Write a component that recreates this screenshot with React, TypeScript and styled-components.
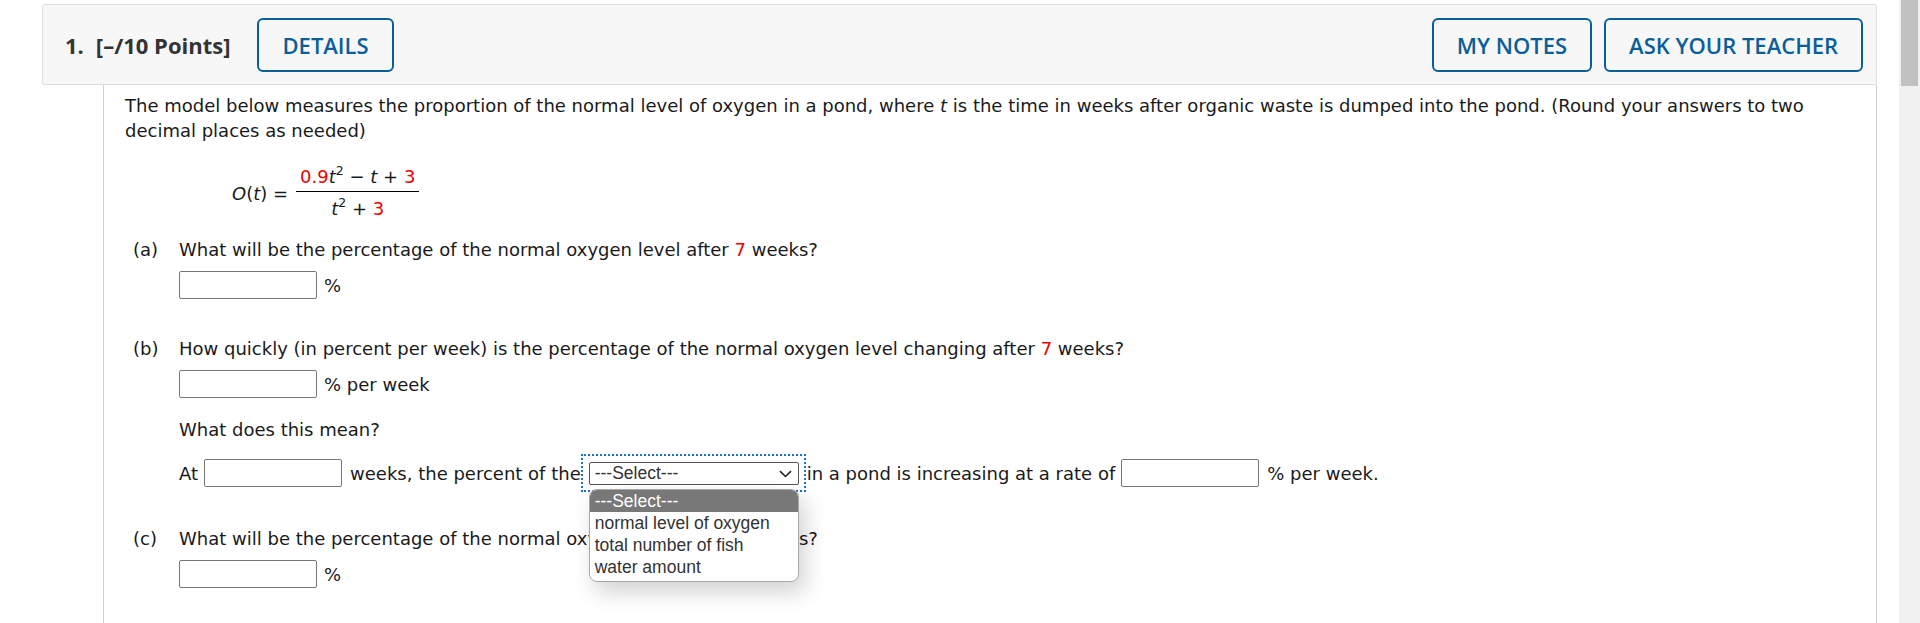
import React from "react";
import styled, { createGlobalStyle } from "styled-components";

const GlobalStyle = createGlobalStyle`
  html, body {
    margin: 0;
    padding: 0;
    background: #fff;
    overflow: hidden;
  }
  body {
    font-family: "DejaVu Sans", Verdana, sans-serif;
    color: #1a1a1a;
  }
`;

const Page = styled.div`
  display: flex;
  height: 623px;
`;

const Main = styled.div`
  flex: 1;
  min-width: 0;
  display: flex;
  flex-direction: column;
  padding: 4px 22px 0 42px;
`;

const ScrollTrack = styled.div`
  width: 21px;
  flex-shrink: 0;
  box-sizing: border-box;
  padding: 0 2px;
  background: #f1f1f1;
`;

const ScrollThumb = styled.div`
  height: 86px;
  background: #c1c1c1;
`;

const QuestionHeader = styled.div`
  display: flex;
  align-items: center;
  height: 81px;
  box-sizing: border-box;
  padding: 0 13px 0 22px;
  background: #f7f7f7;
  border: 1px solid #dedede;
  border-radius: 2px;
`;

const Points = styled.div`
  font-family: "Open Sans", "Liberation Sans", sans-serif;
  font-weight: 700;
  font-size: 22px;
  color: #333;
  white-space: nowrap;

  span {
    margin-right: 12px;
  }
`;

const HeaderButton = styled.button`
  height: 54px;
  padding: 0 23px;
  background: transparent;
  border: 2px solid #0b5f98;
  border-radius: 6px;
  color: #0b5f98;
  font-family: "Open Sans", "Liberation Sans", sans-serif;
  font-weight: 600;
  font-size: 22px;
  white-space: nowrap;
  cursor: pointer;
`;

const DetailsButton = styled(HeaderButton)`
  margin-left: 27px;
`;

const RightButtons = styled.div`
  display: flex;
  gap: 12px;
  margin-left: auto;
`;

const QuestionBody = styled.div`
  flex: 1;
  margin-left: 61px;
  padding: 8px 0 0 21px;
  border-left: 1px solid #cfcfcf;
  border-right: 1px solid #cfcfcf;
  font-size: 18px;
  line-height: 25px;
`;

const Intro = styled.p`
  margin: 0;
  max-width: 1712px;
`;

const Red = styled.span`
  color: #ee0000;
`;

const Var = styled.i`
  font-style: italic;
`;

const Sup = styled.sup`
  font-size: 12.5px;
  line-height: 0;
  vertical-align: 0;
  position: relative;
  top: -8px;
`;

const Formula = styled.div`
  display: flex;
  align-items: center;
  margin: 23px 0 0 107px;
`;

const FormulaLabel = styled.span`
  white-space: nowrap;
`;

const Fraction = styled.span`
  display: inline-flex;
  flex-direction: column;
  align-items: center;
  margin-left: 8px;
  line-height: 22px;
`;

const Numerator = styled.span`
  padding: 0 4px 3px;
  border-bottom: 1px solid #000;
  white-space: nowrap;
`;

const Denominator = styled.span`
  padding-top: 6px;
  white-space: nowrap;
`;

const Part = styled.div<{ $top: number }>`
  display: grid;
  grid-template-columns: 54px 1fr;
  margin-top: ${(p) => p.$top}px;
`;

const PartLabel = styled.div`
  padding-left: 8px;
`;

const PartContent = styled.div`
  min-width: 0;
`;

const AnswerRow = styled.div`
  display: flex;
  align-items: center;
  height: 28px;
  margin-top: 9px;
`;

const Field = styled.input`
  width: 138px;
  height: 28px;
  box-sizing: border-box;
  margin: 0;
  border: 1px solid #767676;
  border-radius: 2px;
  background: #fff;
  flex-shrink: 0;
  display: block;
`;

const Unit = styled.span<{ $ml?: number }>`
  margin-left: ${(p) => p.$ml ?? 7}px;
  white-space: nowrap;
`;

const Prompt = styled.div`
  margin-top: 19px;
`;

const SentenceRow = styled.div`
  display: flex;
  align-items: center;
  height: 38px;
  margin-top: 12px;
`;

const FocusRing = styled.span`
  position: relative;
  display: inline-block;
  flex-shrink: 0;
  padding: 6px 5px 5px 6px;
  border: 2px dotted #1a73d1;
`;

const SelectBox = styled.div`
  display: flex;
  align-items: center;
  justify-content: space-between;
  width: 210px;
  height: 23px;
  box-sizing: border-box;
  padding: 0 6px 0 5px;
  background: #fff;
  border: 1px solid #555;
  border-radius: 2px;
  font-family: "Liberation Sans", Arial, sans-serif;
  font-size: 17.5px;
  line-height: 21px;
  color: #333;
`;

const Dropdown = styled.div`
  position: absolute;
  top: 33px;
  left: 6px;
  z-index: 10;
  width: 210px;
  box-sizing: border-box;
  padding-bottom: 3px;
  background: #fff;
  border: 1px solid #a8a8a8;
  border-radius: 8px;
  overflow: hidden;
  box-shadow: 6px 10px 22px rgba(0, 0, 0, 0.18);
`;

const Option = styled.div<{ $active?: boolean }>`
  height: 22px;
  padding-left: 5px;
  font-family: "Liberation Sans", Arial, sans-serif;
  font-size: 17.5px;
  line-height: 22px;
  white-space: nowrap;
  color: ${(p) => (p.$active ? "#fff" : "#333")};
  background: ${(p) => (p.$active ? "#787878" : "transparent")};
`;

const Chevron = () => (
  <svg width="13" height="8" viewBox="0 0 13 8" fill="none">
    <path d="M1 1.2 6.5 6.5 12 1.2" stroke="#222" strokeWidth="1.6" />
  </svg>
);

const options = [
  "---Select---",
  "normal level of oxygen",
  "total number of fish",
  "water amount",
];

export default function App() {
  return (
    <>
      <GlobalStyle />
      <Page>
        <Main>
          <QuestionHeader>
            <Points>
              <span>1.</span>[–/10 Points]
            </Points>
            <DetailsButton>DETAILS</DetailsButton>
            <RightButtons>
              <HeaderButton>MY NOTES</HeaderButton>
              <HeaderButton>ASK YOUR TEACHER</HeaderButton>
            </RightButtons>
          </QuestionHeader>

          <QuestionBody>
            <Intro>
              The model below measures the proportion of the normal level of
              oxygen in a pond, where <Var>t</Var> is the time in weeks after
              organic waste is dumped into the pond. (Round your answers to two
              decimal places as needed)
            </Intro>

            <Formula>
              <FormulaLabel>
                <Var>O</Var>(<Var>t</Var>) =
              </FormulaLabel>
              <Fraction>
                <Numerator>
                  <Red>0.9</Red>
                  <Var>t</Var>
                  <Sup>2</Sup> − <Var>t</Var> + <Red>3</Red>
                </Numerator>
                <Denominator>
                  <Var>t</Var>
                  <Sup>2</Sup> + <Red>3</Red>
                </Denominator>
              </Fraction>
            </Formula>

            <Part $top={17}>
              <PartLabel>(a)</PartLabel>
              <PartContent>
                What will be the percentage of the normal oxygen level after{" "}
                <Red>7</Red> weeks?
                <AnswerRow>
                  <Field type="text" />
                  <Unit>%</Unit>
                </AnswerRow>
              </PartContent>
            </Part>

            <Part $top={37}>
              <PartLabel>(b)</PartLabel>
              <PartContent>
                How quickly (in percent per week) is the percentage of the
                normal oxygen level changing after <Red>7</Red> weeks?
                <AnswerRow>
                  <Field type="text" />
                  <Unit>% per week</Unit>
                </AnswerRow>
                <Prompt>What does this mean?</Prompt>
                <SentenceRow>
                  <Unit $ml={0}>At</Unit>
                  <Unit $ml={6}>
                    <Field type="text" />
                  </Unit>
                  <Unit $ml={8}>weeks, the percent of the</Unit>
                  <FocusRing>
                    <SelectBox>
                      <span>---Select---</span>
                      <Chevron />
                    </SelectBox>
                    <Dropdown>
                      {options.map((o, i) => (
                        <Option key={o} $active={i === 0}>
                          {o}
                        </Option>
                      ))}
                    </Dropdown>
                  </FocusRing>
                  <Unit $ml={1}>in a pond is increasing at a rate of</Unit>
                  <Unit $ml={6}>
                    <Field type="text" />
                  </Unit>
                  <Unit $ml={8}>% per week.</Unit>
                </SentenceRow>
              </PartContent>
            </Part>

            <Part $top={34}>
              <PartLabel>(c)</PartLabel>
              <PartContent>
                What will be the percentage of the normal oxygen level after{" "}
                <Red>4</Red> weeks?
                <AnswerRow>
                  <Field type="text" />
                  <Unit>%</Unit>
                </AnswerRow>
              </PartContent>
            </Part>
          </QuestionBody>
        </Main>
        <ScrollTrack>
          <ScrollThumb />
        </ScrollTrack>
      </Page>
    </>
  );
}
